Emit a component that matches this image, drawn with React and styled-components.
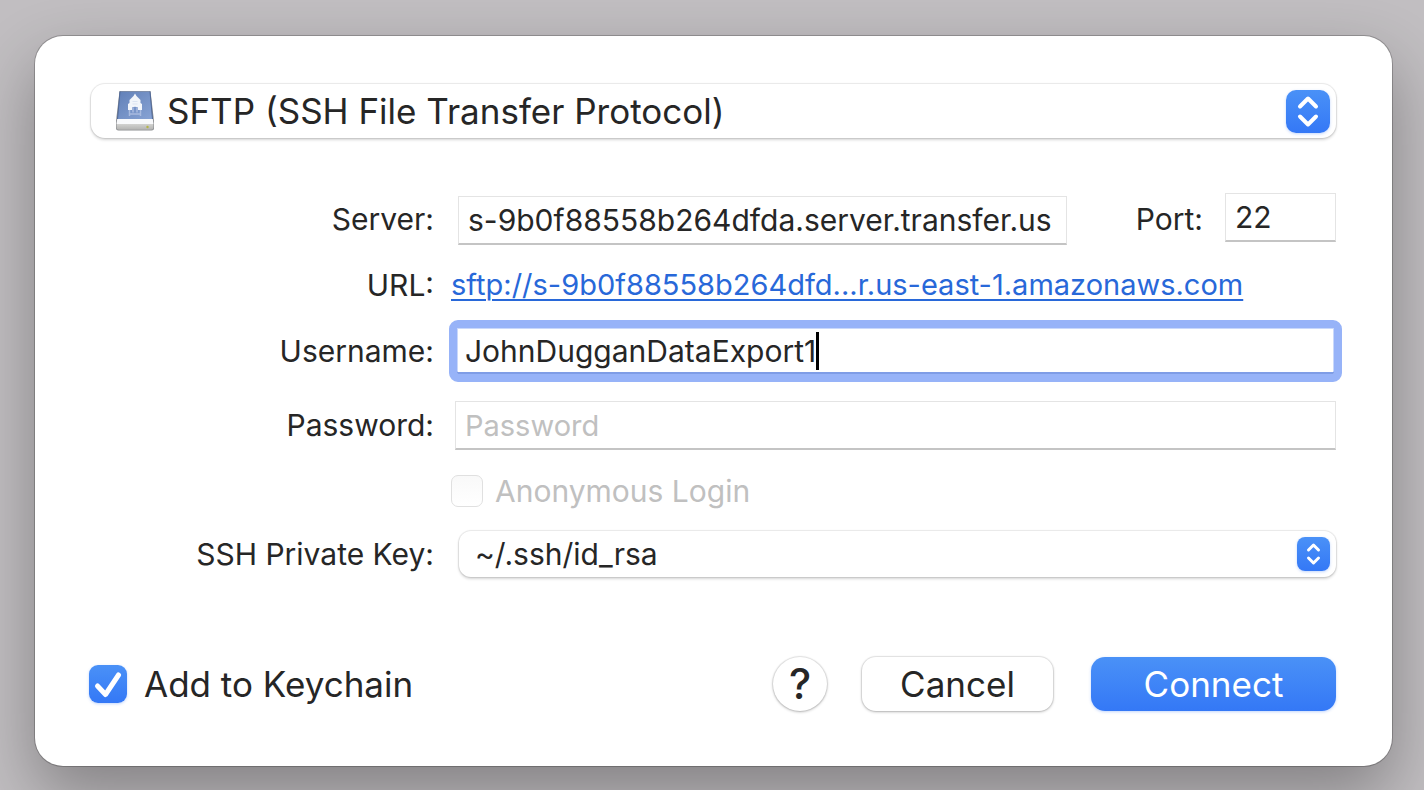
import React from "react";
import styled, { createGlobalStyle } from "styled-components";

const GlobalStyle = createGlobalStyle`
  * {
    box-sizing: border-box;
  }

  body {
    margin: 0;
    background: #c1bec1;
    color: #262626;
    font-family: Inter, "Liberation Sans", sans-serif;
    font-size: 30px;
    line-height: 40px;
  }

  input, select, button {
    margin: 0;
    padding: 0;
    border: 0;
    outline: 0;
    color: inherit;
    font: inherit;
    background: transparent;
  }
`

const Page = styled.main`
  min-height: 100vh;
  padding: 36px 32px 24px 35px;
  overflow: hidden;
`

const Sheet = styled.form`
  padding: 48px 56px 54px;
  background: #ffffff;
  border-radius: 28px;
  box-shadow: 0 0 0 1px rgba(0, 0, 0, 0.22), 0 28px 66px rgba(0, 0, 0, 0.32);
`

const Popup = styled.div`
  display: flex;
  align-items: center;
  flex: 1;
  height: ${(props) => (props.$large ? 54 : 46)}px;
  padding: ${(props) => (props.$large ? "0 6px 0 24px" : "0 6px 0 16px")};
  margin-left: ${(props) => (props.$large ? 0 : 8)}px;
  border-radius: ${(props) => (props.$large ? 14 : 12)}px;
  font-size: ${(props) => (props.$large ? 35 : 30)}px;
  background: #ffffff;
  box-shadow: 0 0 1px 1px rgba(0, 0, 0, 0.09), 0 2px 3px rgba(0, 0, 0, 0.16);

  select {
    flex: 1;
    min-width: 0;
    height: 100%;
    appearance: none;
  }
`

const Drive = styled.svg`
  flex: none;
  width: 40px;
  height: 42px;
  margin-right: 12px;
`

const Arrows = styled.svg`
  flex: none;
  width: ${(props) => (props.$large ? 44 : 33)}px;
  height: ${(props) => (props.$large ? 43 : 34)}px;
  border-radius: ${(props) => (props.$large ? 10 : 8)}px;
  background: linear-gradient(#4a91f7, #3478f6);
  box-shadow: 0 1px 3px rgba(52, 120, 246, 0.3);
`

const Fields = styled.div`
  display: flex;
  flex-direction: column;
  gap: 20px;
  margin-top: 55px;
`

const Row = styled.div`
  display: flex;
  align-items: center;
  height: ${(props) => props.$height}px;
`

const Label = styled.label`
  flex: none;
  width: 343px;
  margin-right: 17px;
  text-align: right;
`

const PortLabel = styled.label`
  margin: 0 22px 0 69px;
`

const TextInput = styled.input`
  flex: 1;
  min-width: 0;
  height: 49px;
  margin-left: 4px;
  padding: 0 9px;
  border: 1px solid #e4e4e4;
  border-bottom: 2px solid #c4c4c4;

  &::placeholder {
    color: #c0c0c0;
    font-size: 29px;
    opacity: 1;
  }
`

const ServerInput = styled(TextInput)`
  align-self: flex-end;
  margin-left: 7px;
`

const PortInput = styled(TextInput)`
  flex: none;
  align-self: flex-start;
  width: 111px;
  margin-left: 0;
`

const UrlLink = styled.a`
  color: #2868d9;
  font-size: 29px;
  text-decoration-thickness: 2px;
  text-underline-offset: 4px;
  white-space: nowrap;
`

const FocusedField = styled.div`
  display: flex;
  align-items: center;
  flex: 1;
  min-width: 0;
  height: 62px;
  margin: 0 -6px 0 -2px;
  padding-left: 8px;
  border: 8px solid #97b3f8;
  border-radius: 9px;
  background: #ffffff;
  box-shadow: inset 0 -2px 0 #7f9de6, inset 0 0 0 1px #c9d8fb;

  input {
    field-sizing: content;
    height: 40px;
    caret-color: transparent;
  }
`

const Caret = styled.span`
  width: 3px;
  height: 38px;
  background: #000000;
`

const Check = styled.label`
  display: flex;
  align-items: center;
  gap: ${(props) => (props.$large ? 17 : 12)}px;
  margin-left: ${(props) => (props.$indent ? 360 : 0)}px;
  color: ${(props) => (props.$muted ? "#c0c0c0" : "inherit")};
  font-size: ${(props) => (props.$large ? 35 : 30)}px;

  input {
    flex: none;
    width: 32px;
    height: 32px;
    appearance: none;
    border: 1px solid #e0e0e0;
    border-radius: 7px;
    background: linear-gradient(#f9f9f9, #ffffff);
  }

  input:checked {
    width: 38px;
    height: 38px;
    border: 0;
    border-radius: 9px;
    background: url("data:image/svg+xml,%3Csvg xmlns='http://www.w3.org/2000/svg' viewBox='0 0 38 38'%3E%3Cpath d='M8.5 21l8 8.500L29.5 10' fill='none' stroke='white' stroke-width='5' stroke-linecap='round' stroke-linejoin='round'/%3E%3C/svg%3E"),
      linear-gradient(#4a91f7, #3478f6);
    box-shadow: 0 1px 3px rgba(52, 120, 246, 0.3);
  }
`

const Footer = styled.footer`
  display: flex;
  align-items: center;
  height: 56px;
  margin: 77px 0 0 -2px;
`

const Button = styled.button`
  width: ${(props) => (props.$primary ? 245 : 191)}px;
  height: 54px;
  margin-left: ${(props) => (props.$primary ? 38 : 35)}px;
  border-radius: 14px;
  font-size: 35px;
  color: ${(props) => (props.$primary ? "#ffffff" : "#262626")};
  background: ${(props) => (props.$primary ? "linear-gradient(#4a91f7, #3478f6)" : "#ffffff")};
  box-shadow: ${(props) =>
    props.$primary
      ? "0 1px 3px rgba(52, 120, 246, 0.3)"
      : "0 0 1px 1px rgba(0, 0, 0, 0.09), 0 1px 3px rgba(0, 0, 0, 0.25)"};
`

const HelpButton = styled(Button)`
  width: 54px;
  margin-left: auto;
  border-radius: 50%;
  font-size: 42px;
  font-weight: 500;
`

function DriveIcon() {
  return (
    <Drive viewBox="0 0 40 42" aria-hidden="true">
      <defs>
        <linearGradient id="top" x1="0" y1="0" x2="1" y2="1">
          <stop offset="0" stopColor="#6180b8" />
          <stop offset="1" stopColor="#88a3d4" />
        </linearGradient>
        <linearGradient id="front" x1="0" y1="0" x2="0" y2="1">
          <stop offset="0" stopColor="#d2d2d0" />
          <stop offset="1" stopColor="#b3b3b1" />
        </linearGradient>
      </defs>
      <path d="M4.500 1h31L39 31v7q0 2.500-2.500 2.500h-33Q1 40.500 1 38v-7z" fill="#8d8f92" />
      <path d="M5 1.500h30L37.500 29h-35z" fill="url(#top)" />
      <path d="M5 1.500L2.500 29M35 1.500L37.500 29" stroke="#4f6898" strokeWidth="1" />
      <path d="M2.200 29h35.600l.7 5h-37z" fill="#f8f9fb" />
      <path d="M1.600 34h36.800v3.500q0 2.300-2.300 2.300H3.900q-2.300 0-2.300-2.300z" fill="url(#front)" />
      <path d="M20 3.500l1.500 2.500 4 4v3l1.500 1V20h-4v-2.500q-3-1.500-6 0V20h-4v-6l1.500-1v-3l4-4z" fill="#f2f5fa" />
      <path d="M17.500 11.500h5M17.500 14h5" stroke="#dbe3f1" />
      <path d="M14.500 20v6M18 17.500v5M22 17.500v5M25.500 20v6M15 24h10" stroke="#a9bbdf" strokeWidth="1.500" />
      <circle cx="32.500" cy="37" r="1.200" fill="#b5b544" />
    </Drive>
  )
}

function ArrowsIcon({ large }) {
  return (
    <Arrows $large={large} viewBox={large ? "0 0 44 43" : "0 0 33 34"} aria-hidden="true">
      <path
        d={large ? "M14 16.500l8-8 8 8M14 26.500l8 8 8-8" : "M11.500 13l5-5 5 5M11.500 21l5 5 5-5"}
        fill="none"
        stroke="#ffffff"
        strokeWidth={large ? 4 : 3}
        strokeLinecap="round"
        strokeLinejoin="round"
      />
    </Arrows>
  )
}

function App() {
  return (
    <Page>
      <GlobalStyle />
      <Sheet onSubmit={(e) => e.preventDefault()}>
        <Popup $large>
          <DriveIcon />
          <select aria-label="Protocol">
            <option>SFTP (SSH File Transfer Protocol)</option>
          </select>
          <ArrowsIcon large />
        </Popup>

        <Fields>
          <Row $height={52}>
            <Label htmlFor="server">Server:</Label>
            <ServerInput id="server" defaultValue="s-9b0f88558b264dfda.server.transfer.us" />
            <PortLabel htmlFor="port">Port:</PortLabel>
            <PortInput id="port" defaultValue="22" />
          </Row>
          <Row $height={40}>
            <Label as="span">URL:</Label>
            <UrlLink href="#">sftp://s-9b0f88558b264dfd...r.us-east-1.amazonaws.com</UrlLink>
          </Row>
          <Row $height={52}>
            <Label htmlFor="username">Username:</Label>
            <FocusedField>
              <input id="username" defaultValue="JohnDugganDataExport1" />
              <Caret />
            </FocusedField>
          </Row>
          <Row $height={56}>
            <Label htmlFor="password">Password:</Label>
            <TextInput id="password" type="password" placeholder="Password" />
          </Row>
          <Row $height={36}>
            <Check $indent $muted>
              <input type="checkbox" disabled />
              Anonymous Login
            </Check>
          </Row>
          <Row $height={50}>
            <Label htmlFor="key">SSH Private Key:</Label>
            <Popup>
              <select id="key">
                <option>~/.ssh/id_rsa</option>
              </select>
              <ArrowsIcon />
            </Popup>
          </Row>
        </Fields>

        <Footer>
          <Check $large>
            <input type="checkbox" defaultChecked />
            Add to Keychain
          </Check>
          <HelpButton type="button" aria-label="Help">?</HelpButton>
          <Button type="button">Cancel</Button>
          <Button type="submit" $primary>Connect</Button>
        </Footer>
      </Sheet>
    </Page>
  )
}

export default App;
